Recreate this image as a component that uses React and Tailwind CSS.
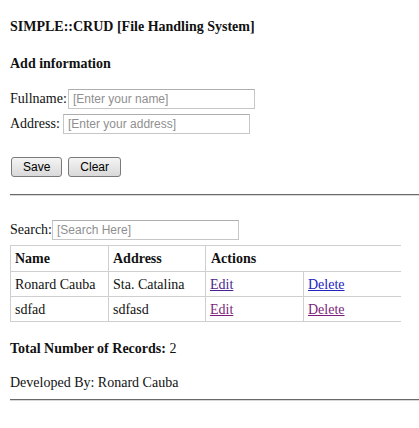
import React from 'react';

const serif = { fontFamily: '"Liberation Serif", "Times New Roman", serif' };

function Field({ label, labelWidth, inputWidth, placeholder, className = '' }) {
    return (
        <div className={`flex items-center h-[20px] ${className}`}>
            <label className={`${labelWidth} shrink-0 text-[14px] leading-[16px]`}>{label}</label>
            <input
                placeholder={placeholder}
                className={`${inputWidth} h-[20px] border border-[#c6c6c6] border-t-[#aeaeae] bg-white px-[4px] text-[12px] text-[#333] placeholder:text-[#8f8f8f] outline-none font-['Liberation_Sans',Arial,sans-serif]`}
            />
        </div>
    );
}

function Btn({ children }) {
    return (
        <button className="h-[20px] px-[11px] rounded-[3px] border border-[#7a7a7a] bg-gradient-to-b from-[#f4f4f4] to-[#d9d9d9] text-[12px] leading-none text-black font-['Liberation_Sans',Arial,sans-serif]">
            {children}
        </button>
    );
}

export default function App() {
    const rows = [
        { name: 'Ronard Cauba', address: 'Sta. Catalina', edit: 'text-[#4b1f8f]', del: 'text-[#2323c2]' },
        { name: 'sdfad', address: 'sdfasd', edit: 'text-[#7b1f7b]', del: 'text-[#7b1f7b]' },
    ];

    return (
        <div className="min-h-[428px] bg-white pl-[10px] text-[#111] text-[14px]" style={serif}>
            {/* header */}
            <div className="pt-[19px] font-bold leading-[16px]">SIMPLE::CRUD [File Handling System]</div>
            <div className="mt-[21px] font-bold leading-[16px]">Add information</div>

            {/* form */}
            <Field label="Fullname:" labelWidth="w-[58px]" inputWidth="w-[187px]" placeholder="[Enter your name]" className="mt-[17px]" />
            <Field label="Address:" labelWidth="w-[53px]" inputWidth="w-[187px]" placeholder="[Enter your address]" className="mt-[5px]" />

            <div className="mt-[23px] flex gap-[6px] pl-[1px]">
                <Btn>Save</Btn>
                <Btn>Clear</Btn>
            </div>

            <div className="mt-[17px] border-t border-[#6a6a6a] border-b border-b-[#d8d8d8]" />

            {/* search + table */}
            <Field label="Search:" labelWidth="w-[42px]" inputWidth="w-[187px]" placeholder="[Search Here]" className="mt-[24px]" />

            <table className="mt-[5px] w-[390px] border-collapse table-fixed text-[14px]">
                <colgroup>
                    <col className="w-[98px]" />
                    <col className="w-[97px]" />
                    <col className="w-[98px]" />
                    <col className="w-[97px]" />
                </colgroup>
                <thead>
                    <tr className="h-[26px] border-y border-[#cfcfcf]">
                        <th className="border-l border-[#cfcfcf] pl-[4px] text-left font-bold">Name</th>
                        <th className="border-l border-[#cfcfcf] pl-[4px] text-left font-bold">Address</th>
                        <th colSpan={2} className="border-l border-[#cfcfcf] pl-[5px] text-left font-bold">Actions</th>
                    </tr>
                </thead>
                <tbody>
                    {rows.map((r, i) => (
                        <tr key={i} className="h-[25px] border-b border-[#cfcfcf]">
                            <td className="border-l border-[#cfcfcf] pl-[4px]">{r.name}</td>
                            <td className="border-l border-[#cfcfcf] pl-[4px]">{r.address}</td>
                            <td className="border-l border-[#cfcfcf] pl-[4px]">
                                <a href="#" className={`${r.edit} underline`}>Edit</a>
                            </td>
                            <td className="border-l border-[#cfcfcf] pl-[4px]">
                                <a href="#" className={`${r.del} underline`}>Delete</a>
                            </td>
                        </tr>
                    ))}
                </tbody>
            </table>

            {/* footer */}
            <div className="mt-[19px] leading-[16px]">
                <span className="font-bold">Total Number of Records:</span> 2
            </div>
            <div className="mt-[18px] leading-[16px]">Developed By: Ronard Cauba</div>
            <div className="mt-[8px] border-t border-[#6a6a6a] border-b border-b-[#d8d8d8]" />
        </div>
    );
}
